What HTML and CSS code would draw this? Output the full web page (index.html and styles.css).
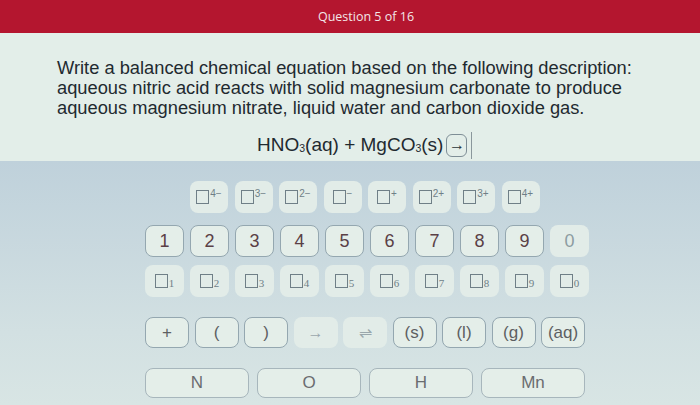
FILE: index.html
```html
<!DOCTYPE html>
<html>
<head>
<meta charset="utf-8">
<link rel="stylesheet" href="styles.css">
</head>
<body>
<header class="topbar"><span class="title">Question 5 of 16</span></header>
<section class="question">
  <p class="prompt">Write a balanced chemical equation based on the following description: aqueous nitric acid reacts with solid magnesium carbonate to produce aqueous magnesium nitrate, liquid water and carbon dioxide gas.</p>
  <div class="equation">
    <span>HNO<sub>3</sub>(aq) + MgCO<sub>3</sub>(s)</span>
    <span class="arrowbox">&#8594;</span>
    <span class="cursor"></span>
  </div>
</section>
<section class="keypad">
  <div class="row charges">
    <div class="key soft"><span class="sq"></span><sup>4&#8722;</sup></div>
    <div class="key soft"><span class="sq"></span><sup>3&#8722;</sup></div>
    <div class="key soft"><span class="sq"></span><sup>2&#8722;</sup></div>
    <div class="key soft"><span class="sq"></span><sup>&#8722;</sup></div>
    <div class="key soft"><span class="sq"></span><sup>+</sup></div>
    <div class="key soft"><span class="sq"></span><sup>2+</sup></div>
    <div class="key soft"><span class="sq"></span><sup>3+</sup></div>
    <div class="key soft"><span class="sq"></span><sup>4+</sup></div>
  </div>
  <div class="row digits">
    <div class="key">1</div><div class="key">2</div><div class="key">3</div><div class="key">4</div><div class="key">5</div>
    <div class="key">6</div><div class="key">7</div><div class="key">8</div><div class="key">9</div><div class="key soft zero">0</div>
  </div>
  <div class="row subs">
    <div class="key soft"><span class="sq"></span><sub>1</sub></div>
    <div class="key soft"><span class="sq"></span><sub>2</sub></div>
    <div class="key soft"><span class="sq"></span><sub>3</sub></div>
    <div class="key soft"><span class="sq"></span><sub>4</sub></div>
    <div class="key soft"><span class="sq"></span><sub>5</sub></div>
    <div class="key soft"><span class="sq"></span><sub>6</sub></div>
    <div class="key soft"><span class="sq"></span><sub>7</sub></div>
    <div class="key soft"><span class="sq"></span><sub>8</sub></div>
    <div class="key soft"><span class="sq"></span><sub>9</sub></div>
    <div class="key soft"><span class="sq"></span><sub>0</sub></div>
  </div>
  <div class="row symbols">
    <div class="key">+</div>
    <div class="key">(</div>
    <div class="key">)</div>
    <div class="key soft arrow">&#8594;</div>
    <div class="key soft arrow">&#8652;</div>
    <div class="key">(s)</div>
    <div class="key">(l)</div>
    <div class="key">(g)</div>
    <div class="key">(aq)</div>
  </div>
  <div class="row elements">
    <div class="key">N</div>
    <div class="key">O</div>
    <div class="key">H</div>
    <div class="key">Mn</div>
  </div>
</section>
</body>
</html>
```
FILE: styles.css
```css
* { box-sizing: border-box; }
html, body { margin: 0; padding: 0; }
body {
  width: 700px;
  height: 405px;
  overflow: hidden;
  font-family: "Liberation Sans", Arial, sans-serif;
  background: #d3e1e2;
}
.topbar {
  height: 33px;
  background: #b4162f;
  display: flex;
  align-items: center;
  justify-content: center;
  padding-left: 32px;
}
.title {
  font-family: "Open Sans", sans-serif;
  font-size: 12.5px;
  color: #f3e6e8;
}
.question {
  height: 128px;
  background: #e3eee9;
  padding: 25px 40px 0 57px;
}
.prompt {
  margin: 0;
  font-size: 18.3px;
  line-height: 20px;
  color: #1f2a30;
}
.equation {
  margin-top: 14px;
  display: flex;
  align-items: center;
  padding-left: 200px;
  font-size: 19px;
  color: #1f2a30;
  height: 26px;
}
.equation sub {
  font-size: 10.5px;
  vertical-align: -1px;
}
.arrowbox {
  margin-left: 3px;
  width: 21px;
  height: 23px;
  border: 1.5px solid #7e8e96;
  border-radius: 6px;
  display: flex;
  align-items: center;
  justify-content: center;
  font-size: 16px;
  color: #2a3438;
}
.cursor {
  margin-left: 4px;
  width: 1px;
  height: 27px;
  background: #8a979c;
}
.keypad {
  height: 244px;
  background: linear-gradient(#bfd1db, #d2e0e2 70%, #d8e5e4);
  padding: 20px 0 0 145px;
}
.row {
  display: flex;
}
.key {
  display: flex;
  align-items: center;
  justify-content: center;
  border: 1.5px solid #94a7b0;
  border-radius: 8px;
  background: #e4eee9;
  color: #5a4046;
  font-size: 18px;
}
.key.soft {
  border-color: transparent;
  background: #e2ece8;
}
.charges {
  margin-left: 45px;
  gap: 6.5px;
  height: 32px;
}
.charges .key { width: 38px; }
.sq {
  display: inline-block;
  width: 13px;
  height: 14px;
  border: 1px solid #6f7f87;
}
.charges sup {
  font-size: 10px;
  color: #6f7f87;
  align-self: flex-start;
  margin-top: 6px;
  margin-left: 1px;
}
.digits {
  margin-top: 12px;
  gap: 6px;
  height: 32px;
}
.digits .key { width: 39px; }
.digits .zero { color: #8d9ca1; }
.subs {
  margin-top: 8px;
  gap: 6px;
  height: 32px;
}
.subs .key { width: 39px; }
.subs sub {
  font-family: "Liberation Serif", serif;
  font-size: 11px;
  color: #6f7f87;
  align-self: flex-end;
  margin-bottom: 7px;
  margin-left: 1px;
}
.symbols {
  margin-top: 20px;
  gap: 5.5px;
  height: 31px;
}
.symbols .key {
  width: 44px;
  font-size: 17px;
  color: #5d5f62;
}
.symbols .arrow {
  color: #9aa7ac;
  font-size: 16px;
}
.elements {
  margin-top: 20px;
  gap: 8px;
  height: 30px;
}
.elements .key {
  width: 104px;
  font-size: 17px;
  color: #6a6c70;
  border-color: #a7b6bc;
}
```
